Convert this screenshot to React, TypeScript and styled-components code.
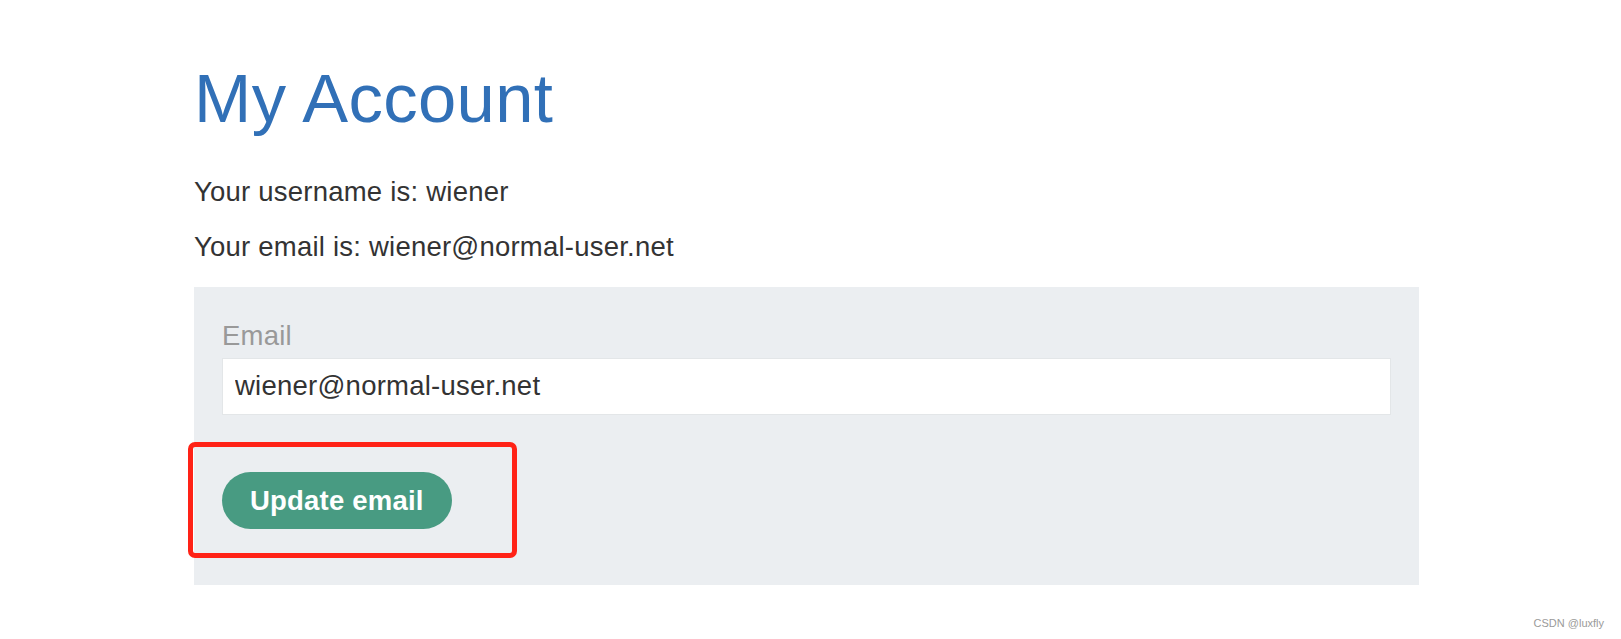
import React from "react";
import styled, { createGlobalStyle } from "styled-components";

const GlobalStyle = createGlobalStyle`
  html, body {
    margin: 0;
    padding: 0;
    background: #ffffff;
  }
  body {
    font-family: "Liberation Sans", Arial, sans-serif;
    color: #333333;
  }
`;

const Page = styled.div`
  position: relative;
  width: 1621px;
  height: 639px;
  overflow: hidden;
  background: #ffffff;
`;

const Container = styled.main`
  width: 1225px;
  margin-left: 194px;
  padding-top: 57.6px;
  display: flex;
  flex-direction: column;
`;

const Title = styled.h1`
  margin: 0;
  font-size: 68.75px;
  line-height: 82.5px;
  font-weight: 400;
  letter-spacing: 0.4px;
  color: #3170b7;
`;

const Info = styled.p`
  margin: 0;
  font-size: 27.5px;
  line-height: 38.5px;
  letter-spacing: 0.22px;
  color: #333333;
  & + & {
    margin-top: 17.1px;
  }
`;

const InfoBlock = styled.div`
  margin-top: 32.8px;
  display: flex;
  flex-direction: column;
`;

const Panel = styled.form`
  margin-top: 20px;
  background: #ebeef1;
  padding: 30px 28px 56px;
  display: flex;
  flex-direction: column;
  align-items: stretch;
`;

const Label = styled.label`
  font-size: 27.5px;
  line-height: 38.5px;
  letter-spacing: 0.2px;
  color: #999999;
`;

const Input = styled.input`
  margin-top: 2.3px;
  box-sizing: border-box;
  height: 57px;
  width: 100%;
  border: 1px solid #e3e6e8;
  background: #ffffff;
  padding: 0 12px;
  font-family: "Liberation Sans", Arial, sans-serif;
  font-size: 27.5px;
  letter-spacing: 0.24px;
  color: #333333;
  outline: none;
`;

const ButtonWrap = styled.div`
  position: relative;
  margin-top: 57px;
  align-self: flex-start;
`;

const Button = styled.button`
  box-sizing: border-box;
  height: 57px;
  padding: 0 28px;
  border: none;
  border-radius: 28.5px;
  background: #489b82;
  color: #ffffff;
  font-family: "Liberation Sans", Arial, sans-serif;
  font-weight: 700;
  font-size: 27.5px;
  letter-spacing: 0.2px;
  line-height: 57px;
  cursor: pointer;
  display: flex;
  align-items: center;
`;

const Highlight = styled.div`
  position: absolute;
  left: -34px;
  top: -30px;
  width: 329px;
  height: 116px;
  box-sizing: border-box;
  border: 5px solid #ff2216;
  border-radius: 7px;
  pointer-events: none;
`;

const Watermark = styled.div`
  position: absolute;
  right: 17px;
  bottom: 10px;
  font-family: "Liberation Sans", Arial, sans-serif;
  font-size: 11px;
  color: #9a9a9a;
`;

export default function App() {
  return (
    <Page>
      <GlobalStyle />
      <Container>
        <Title>My Account</Title>
        <InfoBlock>
          <Info>Your username is: wiener</Info>
          <Info>Your email is: wiener@normal-user.net</Info>
        </InfoBlock>
        <Panel onSubmit={(e) => e.preventDefault()}>
          <Label htmlFor="email">Email</Label>
          <Input id="email" type="email" defaultValue="wiener@normal-user.net" />
          <ButtonWrap>
            <Button type="submit">Update email</Button>
            <Highlight />
          </ButtonWrap>
        </Panel>
      </Container>
      <Watermark>CSDN @luxfly</Watermark>
    </Page>
  );
}
